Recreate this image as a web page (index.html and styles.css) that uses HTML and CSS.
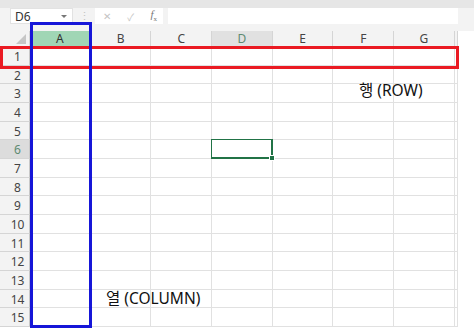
FILE: index.html
```html
<!DOCTYPE html>
<html lang="ko">
<head>
    <meta charset="UTF-8">
    <meta name="viewport" content="width=device-width, initial-scale=1.0">
    <title>행과 열</title>
    <link rel="stylesheet" href="styles.css">
</head>
<body>
    <div class="window">
        <div class="top-edge"></div>
        <div class="formula-bar">
            <div class="name-box">
                <span>D6</span>
                <span class="drop"></span>
            </div>
            <div class="grip">⋮</div>
            <div class="fx-buttons">
                <span class="fx-btn">✕</span>
                <span class="fx-btn">✓</span>
                <span class="fx-btn fx"><i>f</i><sub>x</sub></span>
            </div>
            <div class="formula-input"></div>
        </div>

        <div class="sheet">
            <div class="corner"></div>
            <div class="ch active">A</div>
            <div class="ch">B</div>
            <div class="ch">C</div>
            <div class="ch current">D</div>
            <div class="ch">E</div>
            <div class="ch">F</div>
            <div class="ch">G</div>
            <div class="ch"></div>

            <div class="rh">1</div><div class="c"></div><div class="c"></div><div class="c"></div><div class="c"></div><div class="c"></div><div class="c"></div><div class="c"></div><div class="c"></div>
            <div class="rh">2</div><div class="c"></div><div class="c"></div><div class="c"></div><div class="c"></div><div class="c"></div><div class="c"></div><div class="c"></div><div class="c"></div>
            <div class="rh">3</div><div class="c"></div><div class="c"></div><div class="c"></div><div class="c"></div><div class="c"></div><div class="c"></div><div class="c"></div><div class="c"></div>
            <div class="rh">4</div><div class="c"></div><div class="c"></div><div class="c"></div><div class="c"></div><div class="c"></div><div class="c"></div><div class="c"></div><div class="c"></div>
            <div class="rh">5</div><div class="c"></div><div class="c"></div><div class="c"></div><div class="c"></div><div class="c"></div><div class="c"></div><div class="c"></div><div class="c"></div>
            <div class="rh current">6</div><div class="c"></div><div class="c"></div><div class="c"></div><div class="c selected"></div><div class="c"></div><div class="c"></div><div class="c"></div><div class="c"></div>
            <div class="rh">7</div><div class="c"></div><div class="c"></div><div class="c"></div><div class="c"></div><div class="c"></div><div class="c"></div><div class="c"></div><div class="c"></div>
            <div class="rh">8</div><div class="c"></div><div class="c"></div><div class="c"></div><div class="c"></div><div class="c"></div><div class="c"></div><div class="c"></div><div class="c"></div>
            <div class="rh">9</div><div class="c"></div><div class="c"></div><div class="c"></div><div class="c"></div><div class="c"></div><div class="c"></div><div class="c"></div><div class="c"></div>
            <div class="rh">10</div><div class="c"></div><div class="c"></div><div class="c"></div><div class="c"></div><div class="c"></div><div class="c"></div><div class="c"></div><div class="c"></div>
            <div class="rh">11</div><div class="c"></div><div class="c"></div><div class="c"></div><div class="c"></div><div class="c"></div><div class="c"></div><div class="c"></div><div class="c"></div>
            <div class="rh">12</div><div class="c"></div><div class="c"></div><div class="c"></div><div class="c"></div><div class="c"></div><div class="c"></div><div class="c"></div><div class="c"></div>
            <div class="rh">13</div><div class="c"></div><div class="c"></div><div class="c"></div><div class="c"></div><div class="c"></div><div class="c"></div><div class="c"></div><div class="c"></div>
            <div class="rh">14</div><div class="c"></div><div class="c"></div><div class="c"></div><div class="c"></div><div class="c"></div><div class="c"></div><div class="c"></div><div class="c"></div>
            <div class="rh">15</div><div class="c"></div><div class="c"></div><div class="c"></div><div class="c"></div><div class="c"></div><div class="c"></div><div class="c"></div><div class="c"></div>
        </div>

        <!-- annotations drawn over the sheet -->
        <div class="mark-row"></div>
        <div class="mark-col"></div>
        <div class="label label-row">행 (ROW)</div>
        <div class="label label-col">열 (COLUMN)</div>
    </div>
</body>
</html>
```

FILE: styles.css
```css
:root {
    --grid-line: #e1e1e1;
    --header-bg: #f3f3f3;
    --header-line: #d5d5d5;
    --header-text: #444;
    --excel-green: #217346;
}

body {
    margin: 0;
    background-color: white;
    font-family: 'Noto Sans', 'Noto Sans CJK KR', sans-serif;
}

.window {
    position: relative;
    width: 474px;
    height: 330px;
    overflow: hidden;
}

.top-edge {
    height: 8px;
    background-color: #e6e6e6;
}

.formula-bar {
    display: flex;
    align-items: stretch;
    height: 16px;
    padding: 0 16px 7px 10px;
    background-color: #f3f3f3;
}

.name-box {
    width: 63px;
    display: flex;
    align-items: center;
    justify-content: space-between;
    padding: 0 5px 0 4px;
    box-sizing: border-box;
    background-color: white;
    border: 1px solid #e2e2e2;
    font-size: 12px;
    color: #333;
}

.drop {
    width: 0;
    height: 0;
    border-left: 3px solid transparent;
    border-right: 3px solid transparent;
    border-top: 3px solid #777;
}

.grip {
    width: 22px;
    text-align: center;
    font-size: 11px;
    line-height: 16px;
    color: #c3c3c3;
}

.fx-buttons {
    width: 68px;
    display: flex;
    align-items: center;
    justify-content: space-between;
    padding: 0 6px 0 8px;
    box-sizing: border-box;
    background-color: white;
    margin-right: 5px;
}

.fx-btn {
    font-size: 10px;
    color: #c4c4c4;
}

.fx-btn.fx {
    color: #777;
    font-family: 'Liberation Serif', serif;
    font-size: 11px;
}

.fx-btn.fx sub {
    font-size: 7px;
}

.formula-input {
    flex: 1;
    background-color: white;
}

.sheet {
    display: grid;
    grid-template-columns: 30px repeat(7, 60.7px) 3px;
    grid-template-rows: 16px;
    grid-auto-rows: 18.66px;
    width: 458px;
}

.corner {
    position: relative;
    background-color: var(--header-bg);
    border-right: 1px solid var(--header-line);
    border-bottom: 1px solid var(--header-line);
}

.corner::after {
    content: "";
    position: absolute;
    right: 3px;
    bottom: 2px;
    width: 10px;
    height: 10px;
    background-color: #c6c6c6;
    clip-path: polygon(100% 0, 100% 100%, 0 100%);
}

.ch {
    background-color: var(--header-bg);
    border-right: 1px solid var(--header-line);
    border-bottom: 1px solid #c8c8c8;
    text-align: center;
    font-size: 12px;
    line-height: 16px;
    color: var(--header-text);
}

.ch.active {
    background-color: #a0d6b5;
    color: #333;
}

.ch.current {
    background-color: #e1e1e1;
    color: #5e8b72;
}

.rh {
    background-color: var(--header-bg);
    border-right: 1px solid #c8c8c8;
    border-bottom: 1px solid var(--header-line);
    text-align: center;
    padding-left: 6px;
    font-size: 12px;
    line-height: 19px;
    color: var(--header-text);
}

.rh.current {
    background-color: #dcdcdc;
    color: #5e8b72;
}

.c {
    border-right: 1px solid var(--grid-line);
    border-bottom: 1px solid var(--grid-line);
}

.selected {
    position: relative;
    box-shadow: inset 0 0 0 1px var(--excel-green);
    border-color: var(--excel-green);
    margin: -1px 0 0 -1px;
}

.selected::after {
    content: "";
    position: absolute;
    right: -3px;
    bottom: -3px;
    width: 4px;
    height: 4px;
    background-color: var(--excel-green);
    border: 1px solid white;
}

.mark-row {
    position: absolute;
    left: 0;
    top: 46px;
    width: 459px;
    height: 23px;
    box-sizing: border-box;
    border: 3px solid #ea1a22;
}

.mark-col {
    position: absolute;
    left: 30px;
    top: 22px;
    width: 62px;
    height: 306px;
    box-sizing: border-box;
    border: 3px solid #1616d8;
}

.label {
    position: absolute;
    font-size: 15.5px;
    line-height: 20px;
    color: #111;
    white-space: nowrap;
}

.label-row {
    left: 359px;
    top: 80px;
}

.label-col {
    left: 106px;
    top: 288px;
}
```
